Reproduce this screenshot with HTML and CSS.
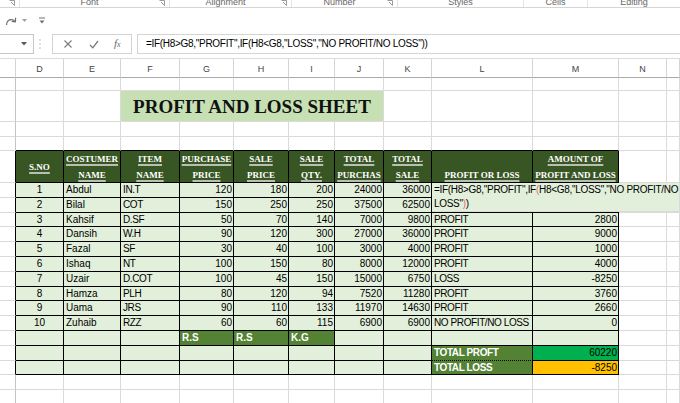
FILE: index.html
```html
<!DOCTYPE html>
<html>
<head>
<meta charset="utf-8">
<link rel="stylesheet" href="styles.css">
</head>
<body>
<div class="ribbon">
  <div class="grp w0"><span class="lbl"></span><span class="launch"><svg width="6" height="6" viewBox="0 0 6 6"><path d="M0.5 0.5h5v5M2 2l3.5 3.5" stroke="#9a9a9a" fill="none"/></svg></span></div>
  <div class="grp w1"><span class="lbl">Font</span><span class="launch"><svg width="6" height="6" viewBox="0 0 6 6"><path d="M0.5 0.5h5v5M2 2l3.5 3.5" stroke="#9a9a9a" fill="none"/></svg></span></div>
  <div class="grp w2"><span class="lbl">Alignment</span><span class="launch"><svg width="6" height="6" viewBox="0 0 6 6"><path d="M0.5 0.5h5v5M2 2l3.5 3.5" stroke="#9a9a9a" fill="none"/></svg></span></div>
  <div class="grp w3"><span class="lbl">Number</span><span class="launch"><svg width="6" height="6" viewBox="0 0 6 6"><path d="M0.5 0.5h5v5M2 2l3.5 3.5" stroke="#9a9a9a" fill="none"/></svg></span></div>
  <div class="grp w4"><span class="lbl">Styles</span></div>
  <div class="grp w5"><span class="lbl">Cells</span></div>
  <div class="grp w6"><span class="lbl">Editing</span></div>
</div>
<div class="qat">
  <svg class="redo" width="12" height="10" viewBox="0 0 12 10"><path d="M1.5 9C1.5 5.2 4 3.2 7 3.6c1.3.2 2.3.8 3 1.7" stroke="#707070" stroke-width="1.2" fill="none"/><path d="M10.6 1.8l-.2 4-3.8-.4" stroke="#707070" stroke-width="1.2" fill="none"/></svg>
  <svg class="qdd" width="5" height="3" viewBox="0 0 5 3"><path d="M0 0h5L2.5 3z" fill="#a0a0a0"/></svg>
  <svg class="cust" width="6" height="7" viewBox="0 0 6 7"><path d="M0 1h6" stroke="#707070"/><path d="M0.5 3.5h5L3 6.5z" fill="#707070"/></svg>
</div>
<div class="fbar">
  <div class="namebox"><svg width="6" height="4" viewBox="0 0 6 4"><path d="M0 0h6L3 3.5z" fill="#595959"/></svg></div>
  <div class="dots"><svg width="2" height="10" viewBox="0 0 2 10"><circle cx="1" cy="1" r="0.7" fill="#a6a6a6"/><circle cx="1" cy="5" r="0.7" fill="#a6a6a6"/><circle cx="1" cy="9" r="0.7" fill="#a6a6a6"/></svg></div>
  <div class="fxbox">
    <svg class="ic-x" width="8" height="8" viewBox="0 0 8 8"><path d="M0.5 0.5l7 7M7.5 0.5l-7 7" stroke="#7a7a7a" stroke-width="1.1"/></svg>
    <svg class="ic-ok" width="10" height="9" viewBox="0 0 10 9"><path d="M1 5l2.8 2.8L9 1" stroke="#7a7a7a" stroke-width="1.3" fill="none"/></svg>
    <span class="fx">f<span class="fxs">x</span></span>
  </div>
  <div class="fbox">=IF(H8&gt;G8,"PROFIT",IF(H8&lt;G8,"LOSS","NO PROFIT/NO LOSS"))</div>
</div>
<div class="sheet">
  <!-- column headers -->
  <div class="ch corner"></div><div class="ch">D</div><div class="ch">E</div><div class="ch">F</div><div class="ch">G</div><div class="ch">H</div><div class="ch">I</div><div class="ch">J</div><div class="ch">K</div><div class="ch">L</div><div class="ch">M</div><div class="ch">N</div><div class="ch"></div>
  <!-- row 1 -->
  <div class="rh"></div><div></div><div></div><div></div><div></div><div></div><div></div><div></div><div></div><div></div><div></div><div></div><div></div>
  <!-- title row -->
  <div class="rh"></div><div></div><div></div><div class="title">PROFIT AND LOSS SHEET</div><div></div><div></div><div></div><div></div><div></div>
  <!-- row 3 -->
  <div class="rh"></div><div></div><div></div><div></div><div></div><div></div><div></div><div></div><div></div><div></div><div></div><div></div><div></div>
  <!-- row 4 -->
  <div class="rh"></div><div class="ab"></div><div class="ab"></div><div class="ab"></div><div class="ab"></div><div class="ab"></div><div class="ab"></div><div class="ab"></div><div class="ab"></div><div class="ab"></div><div class="ab"></div><div></div><div></div>
  <!-- header row -->
  <div class="rh lt"></div>
  <div class="t h one"><span>S.NO</span></div>
  <div class="t h"><span>COSTUMER</span><span>NAME</span></div>
  <div class="t h"><span>ITEM</span><span>NAME</span></div>
  <div class="t h"><span>PURCHASE</span><span>PRICE</span></div>
  <div class="t h"><span>SALE</span><span>PRICE</span></div>
  <div class="t h"><span>SALE</span><span>QTY.</span></div>
  <div class="t h"><span>TOTAL</span><span>PURCHAS</span></div>
  <div class="t h"><span>TOTAL</span><span>SALE</span></div>
  <div class="t h"><i></i><span>PROFIT OR LOSS</span></div>
  <div class="t h"><span>AMOUNT OF</span><span>PROFIT AND LOSS</span></div>
  <div></div><div></div>
  <!-- data rows -->
  <div class="rh lt"></div><div class="t g m">1</div><div class="t g s">Abdul</div><div class="t g s cp">IN.T</div><div class="t g n">120</div><div class="t g n">180</div><div class="t g n">200</div><div class="t g n">24000</div><div class="t g n">36000</div><div class="t g s cp"></div><div class="t g n"></div><div></div><div></div>
  <div class="rh lt"></div><div class="t g m">2</div><div class="t g s">Bilal</div><div class="t g s cp">COT</div><div class="t g n">150</div><div class="t g n">250</div><div class="t g n">250</div><div class="t g n">37500</div><div class="t g n">62500</div><div class="t g s cp"></div><div class="t g n"></div><div></div><div></div>
  <div class="rh lt"></div><div class="t g m">3</div><div class="t g s">Kahsif</div><div class="t g s cp">D.SF</div><div class="t g n">50</div><div class="t g n">70</div><div class="t g n">140</div><div class="t g n">7000</div><div class="t g n">9800</div><div class="t g s cp">PROFIT</div><div class="t g n">2800</div><div></div><div></div>
  <div class="rh lt"></div><div class="t g m">4</div><div class="t g s">Dansih</div><div class="t g s cp">W.H</div><div class="t g n">90</div><div class="t g n">120</div><div class="t g n">300</div><div class="t g n">27000</div><div class="t g n">36000</div><div class="t g s cp">PROFIT</div><div class="t g n">9000</div><div></div><div></div>
  <div class="rh lt"></div><div class="t g m">5</div><div class="t g s">Fazal</div><div class="t g s cp">SF</div><div class="t g n">30</div><div class="t g n">40</div><div class="t g n">100</div><div class="t g n">3000</div><div class="t g n">4000</div><div class="t g s cp">PROFIT</div><div class="t g n">1000</div><div></div><div></div>
  <div class="rh lt"></div><div class="t g m">6</div><div class="t g s">Ishaq</div><div class="t g s cp">NT</div><div class="t g n">100</div><div class="t g n">150</div><div class="t g n">80</div><div class="t g n">8000</div><div class="t g n">12000</div><div class="t g s cp">PROFIT</div><div class="t g n">4000</div><div></div><div></div>
  <div class="rh lt"></div><div class="t g m">7</div><div class="t g s">Uzair</div><div class="t g s cp">D.COT</div><div class="t g n">100</div><div class="t g n">45</div><div class="t g n">150</div><div class="t g n">15000</div><div class="t g n">6750</div><div class="t g s cp">LOSS</div><div class="t g n">-8250</div><div></div><div></div>
  <div class="rh lt"></div><div class="t g m">8</div><div class="t g s">Hamza</div><div class="t g s cp">PLH</div><div class="t g n">80</div><div class="t g n">120</div><div class="t g n">94</div><div class="t g n">7520</div><div class="t g n">11280</div><div class="t g s cp">PROFIT</div><div class="t g n">3760</div><div></div><div></div>
  <div class="rh lt"></div><div class="t g m">9</div><div class="t g s">Uama</div><div class="t g s cp">JRS</div><div class="t g n">90</div><div class="t g n">110</div><div class="t g n">133</div><div class="t g n">11970</div><div class="t g n">14630</div><div class="t g s cp">PROFIT</div><div class="t g n">2660</div><div></div><div></div>
  <div class="rh lt"></div><div class="t g m">10</div><div class="t g s">Zuhaib</div><div class="t g s cp">RZZ</div><div class="t g n">60</div><div class="t g n">60</div><div class="t g n">115</div><div class="t g n">6900</div><div class="t g n">6900</div><div class="t g s cp">NO PROFIT/NO LOSS</div><div class="t g n">0</div><div></div><div></div>
  <!-- units row -->
  <div class="rh lt"></div><div class="t g"></div><div class="t g"></div><div class="t g"></div><div class="t dk">R.S</div><div class="t dk">R.S</div><div class="t dk">K.G</div><div class="t g"></div><div class="t g"></div><div class="t g"></div><div class="t g"></div><div></div><div></div>
  <!-- totals -->
  <div class="rh lt"></div><div class="t g"></div><div class="t g"></div><div class="t g"></div><div class="t g"></div><div class="t g"></div><div class="t g"></div><div class="t g"></div><div class="t g"></div><div class="t dk cp dot">TOTAL PROFT</div><div class="t gp n">60220</div><div></div><div></div>
  <div class="rh lt"></div><div class="t g"></div><div class="t g"></div><div class="t g"></div><div class="t g"></div><div class="t g"></div><div class="t g"></div><div class="t g"></div><div class="t g"></div><div class="t dk cp">TOTAL LOSS</div><div class="t ol n">-8250</div><div></div><div></div>
  <!-- blank rows -->
  <div class="rh"></div><div></div><div></div><div></div><div></div><div></div><div></div><div></div><div></div><div></div><div></div><div></div><div></div>
  <div class="rh"></div><div></div><div></div><div></div><div></div><div></div><div></div><div></div><div></div><div></div><div></div><div></div><div></div>

  <div class="edit">=IF(H8&gt;G8,"PROFIT",IF<span class="p">(</span>H8&lt;G8,"LOSS","NO PROFIT/NO<br>LOSS"<span class="p">)</span>)</div>
</div>
</body>
</html>
```
FILE: styles.css
```css
html, body {
  margin: 0;
  padding: 0;
}
body {
  width: 680px;
  height: 403px;
  overflow: hidden;
  background: #ffffff;
  font-family: "Liberation Sans", Arial, sans-serif;
  color: #000;
}

/* ribbon group labels (cut off by the scroll position) */
.ribbon {
  height: 7px;
  border-bottom: 1px solid #d5d5d5;
  display: flex;
  overflow: hidden;
}
.grp {
  display: flex;
  box-sizing: border-box;
  border-right: 1px solid #e3e3e3;
  overflow: hidden;
}
.w0 { width: 20px; }
.w1 { width: 150px; }
.w2 { width: 122px; }
.w3 { width: 106px; }
.w4 { width: 126px; }
.w5 { width: 64px; }
.w6 { width: 92px; border-right: none; }
.lbl {
  flex: 1;
  text-align: center;
  font-size: 9px;
  line-height: 9px;
  margin-top: -2px;
  color: #666;
}
.launch {
  width: 10px;
}
.launch svg { display: block; }

/* quick access */
.qat {
  height: 25px;
  display: flex;
  align-items: center;
  padding-left: 5px;
  box-sizing: border-box;
}
.redo { display: block; }
.qdd { display: block; margin-left: 5px; }
.cust { display: block; margin-left: 12px; }

/* formula bar */
.fbar {
  height: 25px;
  display: flex;
  align-items: flex-start;
  padding-top: 1px;
  box-sizing: border-box;
}
.namebox {
  width: 34px;
  height: 20px;
  box-sizing: border-box;
  border: 1px solid #c6c6c6;
  border-left: none;
  display: flex;
  justify-content: flex-end;
  align-items: center;
  padding-right: 6px;
}
.namebox svg { display: block; }
.dots {
  width: 12px;
  height: 20px;
  display: flex;
  justify-content: center;
  align-items: center;
}
.dots svg { display: block; }
.fxbox {
  margin-left: 6px;
  width: 80px;
  height: 20px;
  box-sizing: border-box;
  border: 1px solid #d4d4d4;
  display: flex;
  align-items: center;
  padding-left: 11px;
}
.fxbox svg { display: block; }
.ic-ok { margin-left: 17px; }
.fx {
  margin-left: 15px;
  font-family: "Liberation Serif", serif;
  font-style: italic;
  font-size: 11px;
  color: #6a6a6a;
  line-height: 12px;
}
.fxs { font-size: 8px; }
.fbox {
  margin-left: 5px;
  flex: 1;
  height: 20px;
  box-sizing: border-box;
  border: 1px solid #d4d4d4;
  border-right: none;
  padding-left: 8px;
  font-size: 10px;
  letter-spacing: -0.3px;
  line-height: 18px;
  white-space: nowrap;
  overflow: hidden;
}

/* sheet grid */
.sheet {
  position: relative;
  display: grid;
  grid-template-columns: 16px 48px 57px 59px 54px 55px 46px 49px 48px 101px 86px 48px 13px;
  grid-template-rows: 20px 13px 31px 15px 14px 32px repeat(15, 14.8px);
}
.sheet > div {
  box-sizing: border-box;
  border-right: 1px solid #dadada;
  border-bottom: 1px solid #dadada;
  overflow: hidden;
  white-space: nowrap;
  font-size: 10px;
  line-height: 14px;
}
.sheet > .ch {
  text-align: center;
  color: #444;
  font-size: 9px;
  line-height: 20px;
  border-right-color: #d5d5d5;
  border-bottom-color: #ababab;
  border-top: 1px solid #dcdcdc;
}
.sheet > .rh {
  border-right-color: #c4c4c4;
  border-bottom-color: #dadada;
  background: #ffffff;
}
.sheet > .rh.lt { border-right-color: #000; }
.sheet > .ab { border-bottom-color: #000; }
.sheet > .t {
  border-right-color: #000;
  border-bottom-color: #000;
}
.sheet > .g { background: #e2efda; }
.sheet > .m { text-align: center; }
.sheet > .n { text-align: right; padding-right: 1px; }
.sheet > .s { padding-left: 2px; }
.sheet > .cp { letter-spacing: -0.4px; }

.sheet > .title {
  grid-column: span 5;
  background: #c6e0b4;
  display: flex;
  justify-content: center;
  align-items: center;
  font-family: "Liberation Serif", serif;
  font-weight: bold;
  font-size: 19px;
  line-height: 20px;
  padding-top: 1px;
  color: #111;
}

.sheet > .h {
  background: #375623;
  color: #ffffff;
  font-family: "Liberation Serif", serif;
  font-weight: bold;
  font-size: 9px;
  line-height: 10px;
  display: grid;
  grid-template-rows: 16px 15px;
  justify-items: center;
  align-items: center;
}
.sheet > .h.one { grid-template-rows: 1fr; }
.h span {
  text-decoration: underline;
  text-decoration-color: #b9bdb4;
  text-decoration-thickness: 2px;
  text-underline-offset: 2px;
}

.sheet > .dk {
  background: #548235;
  color: #ffffff;
  font-weight: bold;
  padding-left: 2px;
}
.sheet > .dot { border-bottom: 1px dotted #000; }
.sheet > .gp { background: #00b050; }
.sheet > .ol { background: #ffc000; }

/* in-cell edit overlay */
.edit {
  position: absolute;
  left: 432px;
  top: 125px;
  width: 248px;
  height: 29px;
  background: #e2efda;
  font-size: 10px;
  letter-spacing: -0.3px;
  line-height: 14.8px;
  padding-left: 2px;
  box-sizing: border-box;
  white-space: nowrap;
  overflow: hidden;
}
.p { color: #e0706a; }
```
